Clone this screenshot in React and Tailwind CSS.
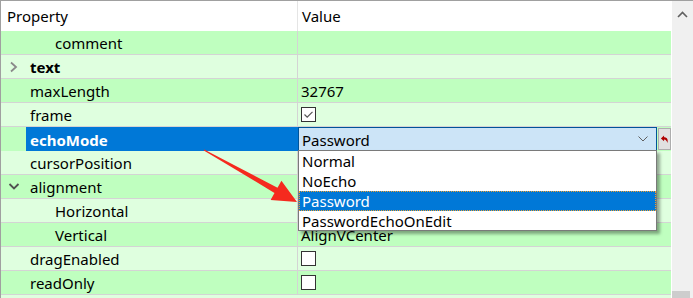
import React from "react";

const DARK = "bg-[#bfffbf]";
const LIGHT = "bg-[#dfffdf]";

function ChevronRight() {
  return (
    <svg width="9" height="12" viewBox="0 0 9 12" className="block">
      <path d="M2 1.5 L7 6 L2 10.5" fill="none" stroke="#8a8a8a" strokeWidth="1.8" />
    </svg>
  );
}
function ChevronDown() {
  return (
    <svg width="12" height="9" viewBox="0 0 12 9" className="block">
      <path d="M1.5 2 L6 6.5 L10.5 2" fill="none" stroke="#505050" strokeWidth="1.8" />
    </svg>
  );
}

function Checkbox({ checked }) {
  return (
    <div className="w-[15px] h-[15px] border border-[#333333] bg-white flex items-center justify-center">
      {checked && (
        <svg width="13" height="13" viewBox="0 0 13 13">
          <path d="M2.5 6.5 L5.2 9.2 L10.5 3.8" fill="none" stroke="#555555" strokeWidth="1.2" />
        </svg>
      )}
    </div>
  );
}

function Row({ label, bg, level = 0, expand, bold, value, selected }) {
  return (
    <div className={`flex h-[24px] border-b border-[#d4d4d4] ${bg}`}>
      <div className="w-[296px] flex items-stretch shrink-0">
        <div className="w-[25px] flex items-center justify-center shrink-0">
          {expand === "right" && <ChevronRight />}
          {expand === "down" && <ChevronDown />}
        </div>
        <div
          className={`flex-1 flex items-center pt-[2px] ${level === 1 ? "pl-[29px]" : "pl-[4px]"} ${
            selected ? "bg-[#0078d7] text-white" : "text-black"
          } ${bold ? "font-bold" : ""}`}
        >
          {label}
        </div>
      </div>
      <div className={`w-px shrink-0 ${selected ? "bg-[#0078d7]" : "bg-[#d4d4d4]"}`} />
      <div className="w-[373px] shrink-0 flex items-center pl-[3px]">
        {typeof value === "string" ? <span className="pt-[2px]">{value}</span> : value}
      </div>
    </div>
  );
}

export default function App() {
  return (
    <div
      className="relative w-[693px] h-[298px] overflow-hidden bg-white border-t border-[#a0a0a0] flex text-[15px] leading-none"
      style={{ fontFamily: '"Noto Sans", "Open Sans", sans-serif' }}
    >
      <div className="w-[671px] border-l border-[#a0a0a0] shrink-0">
        {/* header */}
        <div className="flex h-[30px] bg-white">
          <div className="w-[296px] shrink-0 flex items-center pl-[6px] pt-[1px] text-black">Property</div>
          <div className="w-px shrink-0 bg-[#e5e5e5]" />
          <div className="flex-1 flex items-center pl-[4px] pt-[1px] text-black">Value</div>
        </div>
        <Row label="comment" bg={DARK} level={1} />
        <Row label="text" bg={LIGHT} expand="right" bold />
        <Row label="maxLength" bg={DARK} value="32767" />
        <Row label="frame" bg={LIGHT} value={<Checkbox checked />} />
        {/* echoMode */}
        <div className={`flex h-[24px] ${DARK}`}>
          <div className="w-[25px] shrink-0" />
          <div className="w-[272px] shrink-0 bg-[#0078d7] text-white font-bold flex items-center pl-[4px] pt-[2px]">
            echoMode
          </div>
          <div className="w-[359px] shrink-0 bg-[#cce4f7] border border-[#005499] flex items-center pl-[3px] pr-[8px] text-black">
            <span className="flex-1 pt-[2px]">Password</span>
            <svg width="10" height="6" viewBox="0 0 10 6">
              <path d="M0.5 0.5 L5 5 L9.5 0.5" fill="none" stroke="#606060" strokeWidth="1" />
            </svg>
          </div>
          <div className="w-px shrink-0" />
          <div className="w-[13px] h-[22px] mt-px shrink-0 bg-[#e1e1e1] border border-[#adadad] flex items-center justify-center">
            <svg width="9" height="9" viewBox="0 0 8 8">
              <path d="M0.8 3 L3.6 0.5 L3.6 2 C6.2 2 7.4 3.8 6.6 7.2 C6 5.2 5.2 4.1 3.6 4.1 L3.6 5.5 Z" fill="#b00000" />
            </svg>
          </div>
          <div className="w-px shrink-0 bg-white" />
        </div>
        <Row label="cursorPosition" bg={LIGHT} />
        <Row label="alignment" bg={DARK} expand="down" />
        <Row label="Horizontal" bg={LIGHT} level={1} />
        <Row label="Vertical" bg={DARK} level={1} value="AlignVCenter" />
        <Row label="dragEnabled" bg={LIGHT} value={<Checkbox />} />
        <Row label="readOnly" bg={DARK} value={<Checkbox />} />
        <div className={`h-[24px] ${LIGHT}`} />
      </div>
      <div className="w-px shrink-0 bg-white" />
      {/* scrollbar */}
      <div className="w-[21px] shrink-0 bg-[#f0f0f0] flex flex-col items-center justify-between">
        <div className="h-[26px] flex items-center justify-center">
          <svg width="11" height="7" viewBox="0 0 11 7">
            <path d="M1 6 L5.5 1.5 L10 6" fill="none" stroke="#606060" strokeWidth="1.6" />
          </svg>
        </div>
        <div className="w-[18px] h-[7px] bg-[#cdcdcd] mr-[3px]" />
      </div>

      {/* dropdown popup */}
      <div className="absolute left-[298px] top-[149px] w-[359px] h-[81px] bg-white border border-[#7a7a7a] shadow-[3px_3px_3px_rgba(0,0,0,0.35)] flex flex-col text-black">
        <div className="h-[20px] flex items-center pl-[3px] pt-[1px]">Normal</div>
        <div className="h-[20px] flex items-center pl-[3px] pt-[1px]">NoEcho</div>
        <div className="h-[20px] flex items-center pl-[2px] pt-[1px] bg-[#0078d7] text-white border border-dotted border-[#f0a030]">
          Password
        </div>
        <div className="h-[19px] flex items-center pl-[3px] pt-[1px]">PasswordEchoOnEdit</div>
      </div>

      {/* red annotation arrow */}
      <svg className="absolute left-0 top-0 pointer-events-none" width="693" height="298" viewBox="0 0 693 298">
        <polygon
          points="204.2,148.6 277.5,186.7 281.4,179.7 297,201 270.6,198.9 274.5,191.9 203.8,149.4"
          fill="#f52a1e"
        />
      </svg>
    </div>
  );
}
